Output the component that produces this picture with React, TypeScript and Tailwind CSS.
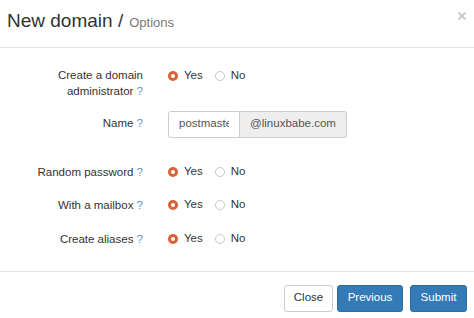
import React from "react";

function Radio({ checked }: { checked: boolean }) {
  return checked ? (
    <span className="flex shrink-0 w-[10px] h-[10px] rounded-full bg-[#d9623a] items-center justify-center">
      <span className="block w-[4px] h-[4px] rounded-full bg-white" />
    </span>
  ) : (
    <span className="block shrink-0 w-[10px] h-[10px] rounded-full border border-[#c8c8c8] bg-white" />
  );
}

function YesNo() {
  return (
    <div className="flex items-center">
      <Radio checked />
      <span className="ml-[6px]">Yes</span>
      <span className="ml-[12px]">
        <Radio checked={false} />
      </span>
      <span className="ml-[6px]">No</span>
    </div>
  );
}

function Q() {
  return <span className="text-[#5b8fc7]"> ?</span>;
}

function Row({ label, children }: { label: React.ReactNode; children: React.ReactNode }) {
  return (
    <div className="flex items-center h-[20px]">
      <div className="w-[143px] text-right leading-[16px]">{label}</div>
      <div className="ml-[25px]">{children}</div>
    </div>
  );
}

export default function App() {
  return (
    <div
      className="w-[474px] h-[318px] bg-white text-[#333] text-[11.5px] overflow-hidden"
      style={{ fontFamily: '"Liberation Sans", Arial, sans-serif' }}
    >
      <div className="h-[48px] border-b border-[#e5e5e5] flex justify-between pl-[7px] pr-[8px]">
        <div className="pt-[10px] leading-[22px] flex items-baseline">
          <span className="text-[19px]">New domain /</span>
          <span className="text-[13px] text-[#777] ml-[6px]">Options</span>
        </div>
        <svg className="mt-[12px]" width="8" height="8" viewBox="0 0 8 8">
          <path d="M0.5 0.5 L7.5 7.5 M7.5 0.5 L0.5 7.5" stroke="#c4c4c4" strokeWidth="1.8" />
        </svg>
      </div>

      <div className="pt-[20px]">
        <div className="flex items-start">
          <div className="w-[143px] text-right leading-[15.5px]">
            Create a domain
            <br />
            administrator<Q />
          </div>
          <div className="ml-[25px] h-[15.5px] flex items-center">
            <YesNo />
          </div>
        </div>

        <div className="flex items-center mt-[11.5px] h-[27px]">
          <div className="w-[143px] text-right">
            Name<Q />
          </div>
          <div className="ml-[25px] flex h-[27px]">
            <div className="w-[72px] shrink-0 border border-[#ccc] rounded-l-[3px] px-[10px] flex items-center text-[#555]">
              <span className="block w-full overflow-hidden whitespace-nowrap">postmaster</span>
            </div>
            <div className="w-[107px] shrink-0 border border-l-0 border-[#ccc] rounded-r-[3px] bg-[#eee] flex items-center justify-center text-[#555]">
              @linuxbabe.com
            </div>
          </div>
        </div>

        <div className="mt-[24px] flex flex-col gap-[13.5px]">
          <Row label={<>Random password<Q /></>}>
            <YesNo />
          </Row>
          <Row label={<>With a mailbox<Q /></>}>
            <YesNo />
          </Row>
          <Row label={<>Create aliases<Q /></>}>
            <YesNo />
          </Row>
        </div>
      </div>

      <div className="mt-[22px] border-t border-[#e5e5e5] pt-[13px] pr-[7px] flex justify-end">
        <button className="w-[49px] h-[27px] border border-[#ccc] rounded-[3px] bg-white text-[#333]">
          Close
        </button>
        <button className="ml-[4px] w-[66px] h-[27px] border border-[#2e6da4] rounded-[3px] bg-[#337ab7] text-white">
          Previous
        </button>
        <button className="ml-[7px] w-[57px] h-[27px] border border-[#2e6da4] rounded-[3px] bg-[#337ab7] text-white">
          Submit
        </button>
      </div>
    </div>
  );
}
